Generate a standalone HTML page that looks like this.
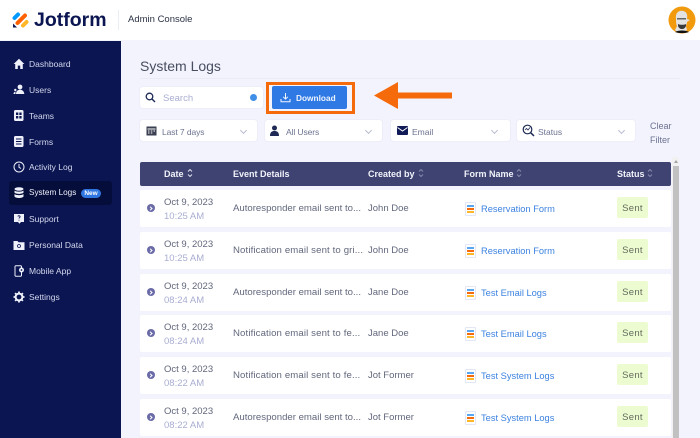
<!DOCTYPE html>
<html><head><meta charset="utf-8"><style>
html,body{margin:0;padding:0;width:700px;height:438px;overflow:hidden;background:#f3f3fe;font-family:"Liberation Sans",sans-serif}
.a{position:absolute}
.t{position:absolute;white-space:nowrap;line-height:12px}
.card{position:absolute;background:#fff;border-radius:3px;box-shadow:0 0 0 1px #eeeefa}
.nav{position:absolute;left:29px;font-size:8.5px;line-height:12px;color:#d5d8ee;white-space:nowrap}
.ic{position:absolute}
.row{position:absolute;left:140px;width:531px;height:37px;background:#fff;border-radius:2px}
.row .t{color:#62677c;font-size:9.500px}
.row .d{left:24px;top:6.500px}
.row .h{left:24px;top:20.500px;color:#a9aed2}
.row .e{left:93px;top:13px;font-size:9.600px}
.row .n{left:228px;top:13px}
.row .f{left:341px;top:13px;color:#3d83e0;font-size:9.300px}
.ar{position:absolute;width:8px;height:8px;background:#6b6ba8;border-radius:50%;left:7px;top:14px}
.ar:after{content:"";position:absolute;left:2px;top:2.500px;width:2px;height:2px;border-top:1px solid #fff;border-right:1px solid #fff;transform:rotate(45deg)}
.ficon{position:absolute;left:325px;top:12px;width:9px;height:12px;border:1px solid #e3e6f5;border-radius:1px;background:#fff}
.ficon i{position:absolute;left:1px;width:7px;height:2px}
.sent{position:absolute;left:477px;top:7px;width:31px;height:21px;background:#edfbd0;border-radius:2px;color:#636b5e;font-size:9.500px;line-height:23px;text-align:center;letter-spacing:.3px}
.chev{position:absolute;width:4px;height:4px;border-right:1px solid #b8bcd0;border-bottom:1px solid #b8bcd0;transform:rotate(45deg)}
.hd{position:absolute;color:#f2f3fa;font-size:9px;font-weight:bold;line-height:12px;white-space:nowrap;top:168px}
.fl{font-size:8.500px;color:#6c7390;top:126px}
</style></head><body>
<div class="a" style="left:0;top:0;width:700px;height:40px;background:#fff"></div>
<svg class="ic" style="left:12px;top:11px" width="18" height="18" viewBox="0 0 18 18"><path d="M2.500 7 6 3.500" stroke="#0099ff" stroke-width="4" stroke-linecap="round"/><path d="M5.500 12 13 4.500" stroke="#ff6100" stroke-width="4" stroke-linecap="round"/><path d="M11 14.500 14.500 11" stroke="#ffb629" stroke-width="4" stroke-linecap="round"/><path d="M1 12.500V16.500H5Z" fill="#0a1551"/></svg>
<div class="t" style="left:34px;top:8px;font-size:19.500px;line-height:25px;font-weight:bold;color:#0a1551">Jotform</div>
<div class="a" style="left:118px;top:10px;width:1px;height:20px;background:#eceef6"></div>
<div class="t" style="left:128px;top:14px;font-size:9.500px;color:#2b3245">Admin Console</div>
<svg class="ic" style="left:668px;top:6px" width="28" height="28" viewBox="0 0 28 28"><circle cx="14" cy="14" r="13.500" fill="#f29a0e"/><path d="M8 13c-1-6 3-9 7-8 3 .5 5 3 4 8l3 1-3 2c0 2-1 3-1 4l1 4c-3 3-9 3-12 0l2-4c-1-2-1-4-1-7z" fill="#e2e2e2"/><path d="M10 18c2 1 6 1 8 0v2c-1 2-2 3-4 3-2 0-3-1-4-3z" fill="#3a3a3a"/><path d="M9 12h9v1.500H9z" fill="#666"/><path d="M7 26c3-2 11-2 14 0-4 1.500-10 1.500-14 0z" fill="#111"/></svg>

<div class="a" style="left:0;top:41px;width:121px;height:397px;background:#0a1551"></div>
<div class="a" style="left:9px;top:181px;width:103px;height:24px;background:#050d3a;border-radius:3px"></div>

<svg class="ic" style="left:13px;top:58px" width="12" height="12" viewBox="0 0 12 12"><path d="M6 .8.600 6H2.200V11H4.800V7.600H7.200V11H9.800V6H11.400Z" fill="#eef0fa"/></svg>
<div class="nav" style="top:58px">Dashboard</div>
<svg class="ic" style="left:13px;top:84px" width="12" height="12" viewBox="0 0 12 12"><circle cx="7" cy="3" r="2.400" fill="#eef0fa"/><path d="M3 10c0-3 1.700-4.300 4-4.300S11 7 11.300 10Z" fill="#eef0fa"/><circle cx="2.300" cy="6" r="1.200" fill="#eef0fa"/><path d="M.5 10c0-1.500.7-2.300 2-2.300V10Z" fill="#eef0fa"/></svg>
<div class="nav" style="top:84px">Users</div>
<svg class="ic" style="left:14px;top:110px" width="10" height="12" viewBox="0 0 10 12"><rect width="9.500" height="11" rx="1.500" fill="#eef0fa"/><rect x="2" y="2.500" width="2.300" height="2.500" fill="#0a1551"/><rect x="5.300" y="2.500" width="2.300" height="2.500" fill="#0a1551"/><rect x="2" y="6" width="2.300" height="2.500" fill="#0a1551"/><rect x="5.300" y="6" width="2.300" height="2.500" fill="#0a1551"/></svg>
<div class="nav" style="top:110px">Teams</div>
<svg class="ic" style="left:14px;top:136px" width="10" height="12" viewBox="0 0 10 12"><rect width="9.500" height="11" rx="1.500" fill="#eef0fa"/><path d="M2 3h5.500M2 5.500h5.500M2 8h5.500" stroke="#0a1551" stroke-width="1"/></svg>
<div class="nav" style="top:136px">Forms</div>
<svg class="ic" style="left:13px;top:161px" width="12" height="12" viewBox="0 0 12 12"><circle cx="6" cy="6" r="5" fill="none" stroke="#eef0fa" stroke-width="1"/><path d="M6 3v3.300l2 1.200" fill="none" stroke="#eef0fa" stroke-width="1"/></svg>
<div class="nav" style="top:161px">Activity Log</div>
<svg class="ic" style="left:14px;top:187px" width="10" height="12" viewBox="0 0 10 12"><ellipse cx="5" cy="2" rx="4.500" ry="1.700" fill="#eef0fa"/><path d="M.5 3.500c1 1.500 8 1.500 9 0V5.500c-1 1.800-8 1.800-9 0zM.5 7c1 1.500 8 1.500 9 0V9.500c-1 2-8 2-9 0z" fill="#eef0fa"/></svg>
<div class="nav" style="top:187px;color:#eef0fa;font-size:8.200px">System Logs</div>
<div class="a" style="left:81px;top:189px;width:20px;height:9px;background:#2f76e0;border-radius:5px;color:#fff;font-size:6.500px;font-weight:bold;line-height:9px;text-align:center">New</div>
<svg class="ic" style="left:13px;top:213px" width="12" height="12" viewBox="0 0 12 12"><path d="M1 1h10v8H8l-1.500 1.800L5 9H1Z" fill="#eef0fa"/><path d="M4.800 3.400c.5-1 2.400-.8 2.300.4 0 .8-1 .9-1.100 1.700M6 6.700v.8" stroke="#0a1551" stroke-width=".9" fill="none"/></svg>
<div class="nav" style="top:213px">Support</div>
<svg class="ic" style="left:13px;top:239px" width="12" height="12" viewBox="0 0 12 12"><path d="M.5 2h4l1 1.300h6V11H.5Z" fill="#eef0fa"/><circle cx="6" cy="7" r="1.500" fill="none" stroke="#0a1551" stroke-width=".8"/></svg>
<div class="nav" style="top:239px">Personal Data</div>
<svg class="ic" style="left:14px;top:265px" width="11" height="12" viewBox="0 0 11 12"><rect x="1" y=".8" width="6.500" height="10.400" rx="1" fill="none" stroke="#eef0fa" stroke-width="1"/><circle cx="7.500" cy="5" r="2.500" fill="#eef0fa"/><circle cx="7.500" cy="5" r=".9" fill="#0a1551"/></svg>
<div class="nav" style="top:265px">Mobile App</div>
<svg class="ic" style="left:13px;top:291px" width="12" height="12" viewBox="0 0 12 12"><circle cx="6" cy="6" r="3.400" fill="none" stroke="#eef0fa" stroke-width="2"/><path d="M6 .5v2M6 9.500v2M.5 6h2M9.500 6h2M2.100 2.100l1.400 1.400M8.500 8.500l1.400 1.400M2.100 9.900l1.400-1.400M8.500 3.500l1.400-1.400" stroke="#eef0fa" stroke-width="1.800"/></svg>
<div class="nav" style="top:291px">Settings</div>

<div class="t" style="left:140px;top:58px;font-size:14px;line-height:17px;color:#484e60">System Logs</div>
<div class="a" style="left:140px;top:78px;width:540px;height:1px;background:#ebebf8"></div>

<div class="card" style="left:140px;top:87px;width:123px;height:21px"></div>
<svg class="ic" style="left:145px;top:92px" width="11" height="11" viewBox="0 0 11 11"><circle cx="4.500" cy="4.500" r="3.300" fill="none" stroke="#1e2a55" stroke-width="1.300"/><path d="M7 7l3 3" stroke="#1e2a55" stroke-width="1.400"/></svg>
<div class="t" style="left:163px;top:93px;font-size:9.500px;color:#a9aed2">Search</div>
<div class="a" style="left:250px;top:94px;width:7px;height:7px;border-radius:50%;background:#3f8ee8"></div>

<div class="a" style="left:266px;top:82px;width:89px;height:32px;box-sizing:border-box;border:3px solid #f56b0c"></div>
<div class="a" style="left:272px;top:86px;width:75px;height:23px;background:#2e79e4;border-radius:2px"></div>
<svg class="ic" style="left:280px;top:92px" width="11" height="11" viewBox="0 0 11 11"><path d="M5.500 1v6M3.200 4.800 5.500 7.100 7.800 4.800M1 7v2.800h9V7" fill="none" stroke="#f2f6ff" stroke-width="1"/></svg>
<div class="t" style="left:296px;top:92px;font-size:8.300px;font-weight:bold;color:#eef4ff">Download</div>
<svg class="ic" style="left:373px;top:81px" width="80" height="29" viewBox="0 0 80 29"><path d="M1 14.500 25 1V11.500H79V17.500H25V28Z" fill="#f56b0c"/></svg>

<div class="card" style="left:140px;top:120px;width:117px;height:21px"></div>
<svg class="ic" style="left:146px;top:125px" width="11" height="11" viewBox="0 0 11 11"><path d="M.5 1.500H10.500V10.500H.5Z" fill="#3a3f52"/><path d="M1.500 4h8M2 6h1.500M4.800 6h1.500M7.500 6h1.500M2 8h1.500M4.800 8h1.500" stroke="#fff" stroke-width=".9"/></svg>
<div class="t fl" style="left:162px;letter-spacing:-.1px">Last 7 days</div>
<div class="chev" style="left:241px;top:128px"></div>

<div class="card" style="left:265px;top:120px;width:117px;height:21px"></div>
<svg class="ic" style="left:269px;top:125px" width="11" height="11" viewBox="0 0 11 11"><circle cx="5.500" cy="3" r="2.500" fill="#1e2a55"/><path d="M1 11c0-4 2-5 4.500-5S10 7 10 11Z" fill="#1e2a55"/></svg>
<div class="t fl" style="left:286px;letter-spacing:-.1px">All Users</div>
<div class="chev" style="left:366px;top:128px"></div>

<div class="card" style="left:391px;top:120px;width:119px;height:21px"></div>
<svg class="ic" style="left:397px;top:126px" width="11" height="9" viewBox="0 0 11 9"><rect width="11" height="9" rx="1" fill="#0f1a57"/><path d="M.5 1.500 5.500 5 10.500 1.500" fill="none" stroke="#fff" stroke-width="1"/></svg>
<div class="t fl" style="left:412px">Email</div>
<div class="chev" style="left:492px;top:128px"></div>

<div class="card" style="left:517px;top:120px;width:118px;height:21px"></div>
<svg class="ic" style="left:522px;top:124px" width="13" height="13" viewBox="0 0 13 13"><circle cx="5.500" cy="5.500" r="4.300" fill="none" stroke="#1e2a55" stroke-width="1.200"/><path d="M8.800 8.800 12 12" stroke="#1e2a55" stroke-width="1.500"/><path d="M3 6l1.500-1.500L6 6l2-2.500" fill="none" stroke="#1e2a55" stroke-width=".8"/></svg>
<div class="t fl" style="left:538px">Status</div>
<div class="chev" style="left:619px;top:128px"></div>

<div class="t" style="left:650px;top:120px;font-size:9px;color:#6c7390">Clear</div>
<div class="t" style="left:650px;top:134px;font-size:9px;color:#6c7390">Filter</div>

<div class="a" style="left:672px;top:157px;width:7px;height:281px;background:#f1f1f1"></div>
<div class="a" style="left:673px;top:166px;width:6px;height:272px;background:#c1c1c1"></div>
<div class="a" style="left:674px;top:160px;border-left:2.500px solid transparent;border-right:2.500px solid transparent;border-bottom:3px solid #a3a3a3"></div>

<div class="a" style="left:140px;top:162px;width:531px;height:24px;background:#3e4371;border-radius:2px"></div>
<div class="hd" style="left:164px">Date</div>
<div class="hd" style="left:233px">Event Details</div>
<div class="hd" style="left:368px">Created by</div>
<div class="hd" style="left:464px">Form Name</div>
<div class="hd" style="left:617px">Status</div>
<svg class="ic" style="left:187px;top:168px" width="6" height="10" viewBox="0 0 6 10"><path d="M1 3.500 3 1.500 5 3.500M1 6.500 3 8.500 5 6.500" fill="none" stroke="#e8e9f5" stroke-width=".9"/></svg>
<svg class="ic" style="left:418px;top:168px" width="6" height="10" viewBox="0 0 6 10"><path d="M1 3.500 3 1.500 5 3.500M1 6.500 3 8.500 5 6.500" fill="none" stroke="#8a8db0" stroke-width=".9"/></svg>
<svg class="ic" style="left:516px;top:168px" width="6" height="10" viewBox="0 0 6 10"><path d="M1 3.500 3 1.500 5 3.500M1 6.500 3 8.500 5 6.500" fill="none" stroke="#8a8db0" stroke-width=".9"/></svg>
<svg class="ic" style="left:647px;top:168px" width="6" height="10" viewBox="0 0 6 10"><path d="M1 3.500 3 1.500 5 3.500M1 6.500 3 8.500 5 6.500" fill="none" stroke="#8a8db0" stroke-width=".9"/></svg>

<div class="row" style="top:190px"><div class="ar"></div><div class="t d">Oct 9, 2023</div><div class="t h">10:25 AM</div><div class="t e">Autoresponder email sent to...</div><div class="t n">John Doe</div><div class="ficon"><i style="top:2px;background:#5aa6f0"></i><i style="top:5px;background:#f56b0c"></i><i style="top:8px;background:#ffb629"></i></div><div class="t f">Reservation Form</div><div class="sent">Sent</div></div>

<div class="row" style="top:232px"><div class="ar"></div><div class="t d">Oct 9, 2023</div><div class="t h">10:25 AM</div><div class="t e" style="letter-spacing:.13px">Notification email sent to gri...</div><div class="t n">John Doe</div><div class="ficon"><i style="top:2px;background:#5aa6f0"></i><i style="top:5px;background:#f56b0c"></i><i style="top:8px;background:#ffb629"></i></div><div class="t f">Reservation Form</div><div class="sent">Sent</div></div>

<div class="row" style="top:274px"><div class="ar"></div><div class="t d">Oct 9, 2023</div><div class="t h">08:24 AM</div><div class="t e">Autoresponder email sent to...</div><div class="t n">Jane Doe</div><div class="ficon"><i style="top:2px;background:#5aa6f0"></i><i style="top:5px;background:#f56b0c"></i><i style="top:8px;background:#ffb629"></i></div><div class="t f">Test Email Logs</div><div class="sent">Sent</div></div>

<div class="row" style="top:315px"><div class="ar"></div><div class="t d">Oct 9, 2023</div><div class="t h">08:24 AM</div><div class="t e" style="letter-spacing:.13px">Notification email sent to fe...</div><div class="t n">Jane Doe</div><div class="ficon"><i style="top:2px;background:#5aa6f0"></i><i style="top:5px;background:#f56b0c"></i><i style="top:8px;background:#ffb629"></i></div><div class="t f">Test Email Logs</div><div class="sent">Sent</div></div>

<div class="row" style="top:357px"><div class="ar"></div><div class="t d">Oct 9, 2023</div><div class="t h">08:22 AM</div><div class="t e" style="letter-spacing:.13px">Notification email sent to fe...</div><div class="t n">Jot Former</div><div class="ficon"><i style="top:2px;background:#5aa6f0"></i><i style="top:5px;background:#f56b0c"></i><i style="top:8px;background:#ffb629"></i></div><div class="t f">Test System Logs</div><div class="sent">Sent</div></div>

<div class="row" style="top:399px"><div class="ar"></div><div class="t d">Oct 9, 2023</div><div class="t h">08:22 AM</div><div class="t e">Autoresponder email sent to...</div><div class="t n">Jot Former</div><div class="ficon"><i style="top:2px;background:#5aa6f0"></i><i style="top:5px;background:#f56b0c"></i><i style="top:8px;background:#ffb629"></i></div><div class="t f">Test System Logs</div><div class="sent">Sent</div></div>
</body></html>
